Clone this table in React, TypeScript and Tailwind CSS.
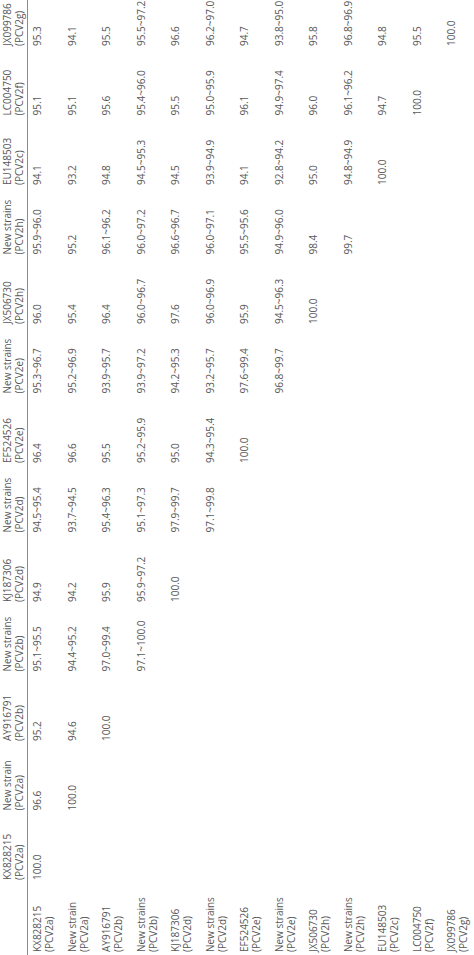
const COLUMNS: [string, string][] = [
  ["KX828215", "(PCV2a)"],
  ["New strain", "(PCV2a)"],
  ["AY916791", "(PCV2b)"],
  ["New strains", "(PCV2b)"],
  ["KJ187306", "(PCV2d)"],
  ["New strains", "(PCV2d)"],
  ["EF524526", "(PCV2e)"],
  ["New strains", "(PCV2e)"],
  ["JX506730", "(PCV2h)"],
  ["New strains", "(PCV2h)"],
  ["EU148503", "(PCV2c)"],
  ["LC004750", "(PCV2f)"],
  ["JX099786", "(PCV2g)"],
]

// upper triangle, row i starts at column i
const VALUES: string[][] = [
  ["100.0", "96.6", "95.2", "95.1~95.5", "94.9", "94.5~95.4", "96.4", "95.3~96.7", "96.0", "95.9~96.0", "94.1", "95.1", "95.3"],
  ["100.0", "94.6", "94.4~95.2", "94.2", "93.7~94.5", "96.6", "95.2~96.9", "95.4", "95.2", "93.2", "95.1", "94.1"],
  ["100.0", "97.0~99.4", "95.9", "95.4~96.3", "95.5", "93.9~95.7", "96.4", "96.1~96.2", "94.8", "95.6", "95.5"],
  ["97.1~100.0", "95.9~97.2", "95.1~97.3", "95.2~95.9", "93.9~97.2", "96.0~96.7", "96.0~97.2", "94.5~95.3", "95.4~96.0", "95.5~97.2"],
  ["100.0", "97.9~99.7", "95.0", "94.2~95.3", "97.6", "96.6~96.7", "94.5", "95.5", "96.6"],
  ["97.1~99.8", "94.3~95.4", "93.2~95.7", "96.0~96.9", "96.0~97.1", "93.9~94.9", "95.0~95.9", "96.2~97.0"],
  ["100.0", "97.6~99.4", "95.9", "95.5~95.6", "94.1", "96.1", "94.7"],
  ["96.8~99.7", "94.5~96.3", "94.9~96.0", "92.8~94.2", "94.9~97.4", "93.8~95.0"],
  ["100.0", "98.4", "95.0", "96.0", "95.8"],
  ["99.7", "94.8~94.9", "96.1~96.2", "96.8~96.9"],
  ["100.0", "94.7", "94.8"],
  ["100.0", "95.5"],
  ["100.0"],
]

function Label({ name, group }: { name: string; group: string }) {
  return (
    <div className="leading-[12px]">
      <div className="whitespace-nowrap">{name}</div>
      <div className="whitespace-nowrap">{group}</div>
    </div>
  )
}

export default function App() {
  return (
    <div className="relative h-[955px] w-[474px] overflow-hidden bg-white">
      {/* the table is printed sideways, so it is laid out flat and turned */}
      <div className="h-[474px] w-[980px] origin-top-left translate-y-[955px] -rotate-90 font-['Open_Sans','Liberation_Sans',sans-serif] text-[10px] text-[#585858]">
        <div className="grid h-[28px] grid-cols-[72px_repeat(13,69.5px)] items-end border-b-[1.5px] border-[#8c8c8c] pb-[2px]">
          <div />
          {COLUMNS.map(([name, group], i) => (
            <div key={i} className="pl-[3px]">
              <Label name={name} group={group} />
            </div>
          ))}
        </div>
        {COLUMNS.map(([name, group], r) => (
          <div
            key={r}
            className="grid h-[34.5px] grid-cols-[72px_repeat(13,69.5px)] items-start pt-[3px]"
          >
            <div className="pl-[3px]">
              <Label name={name} group={group} />
            </div>
            {COLUMNS.map((_, c) => (
              <div key={c} className="whitespace-nowrap pl-[3px] leading-[12px]">
                {c >= r ? VALUES[r][c - r] : ""}
              </div>
            ))}
          </div>
        ))}
      </div>
    </div>
  )
}
